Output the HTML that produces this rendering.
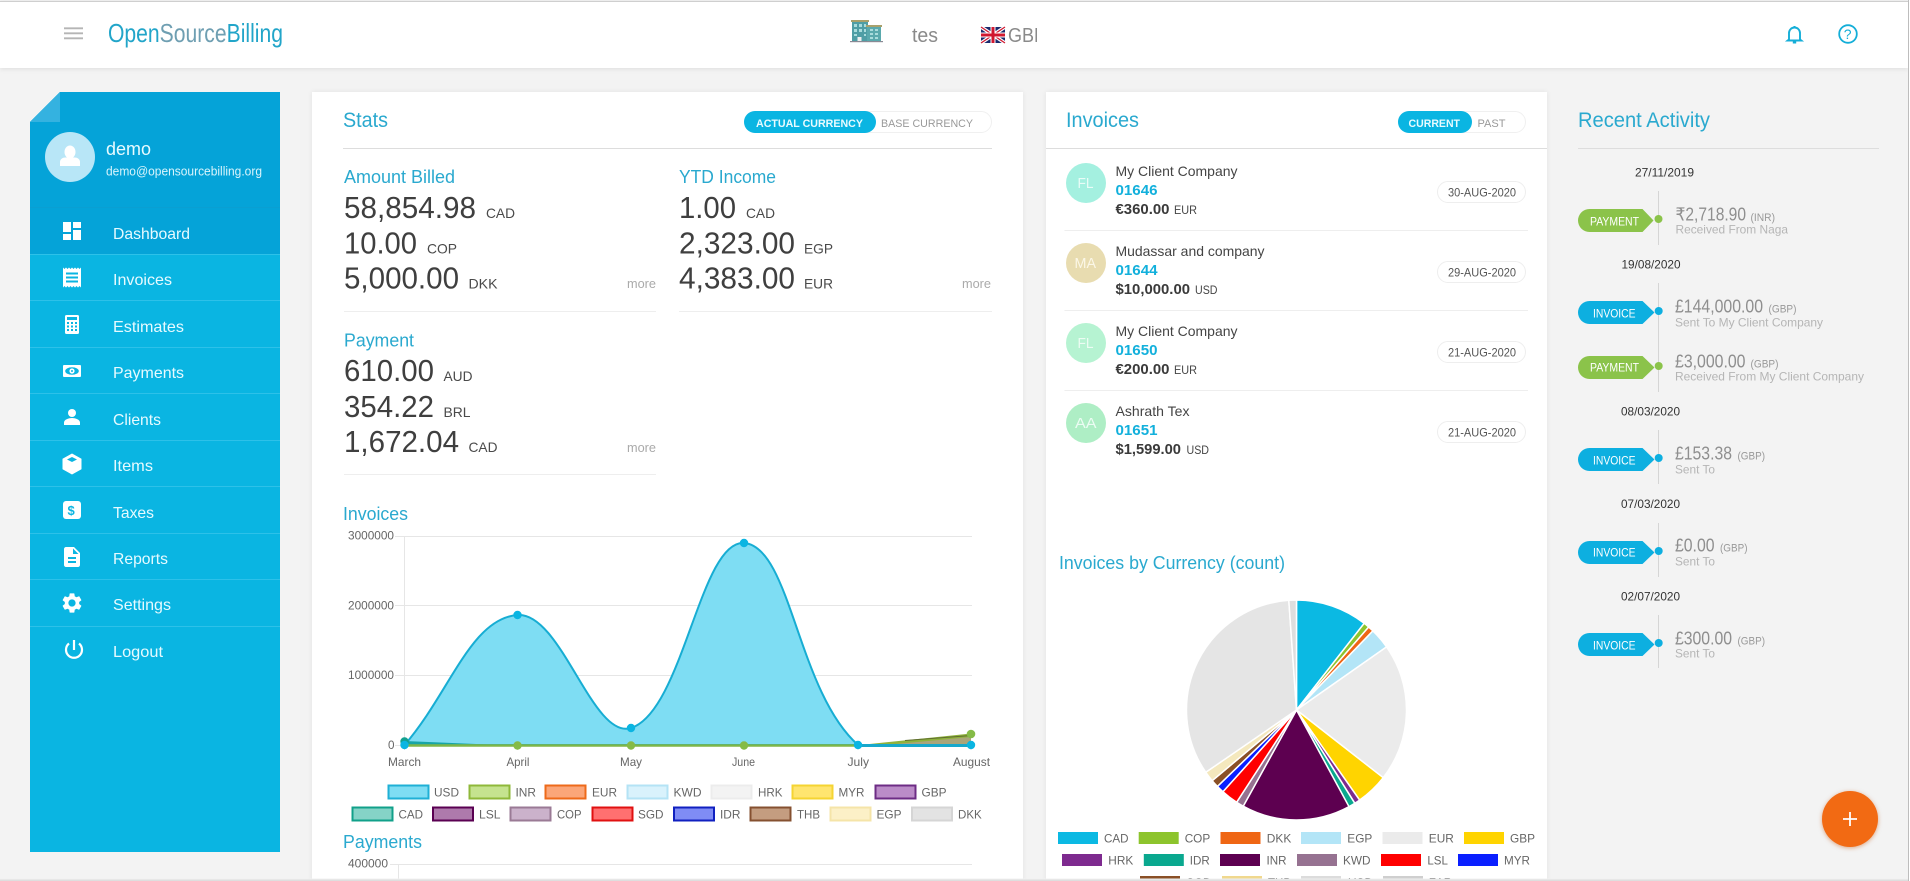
<!DOCTYPE html>
<html lang="en">
<head>
<meta charset="utf-8">
<title>OpenSourceBilling Dashboard</title>
<style>
html,body{margin:0;padding:0;width:1910px;height:881px;overflow:hidden;background:#f3f3f3;font-family:"Liberation Sans",sans-serif}
#wrap{position:absolute;left:0;top:0;width:1910px;height:881px;overflow:hidden;background:#f3f3f3}
.box{position:absolute}
#hdr{left:0;top:1px;width:1908px;height:67px;background:#fff;border-top:1px solid #cfcfcf;box-sizing:border-box;box-shadow:0 1px 5px rgba(0,0,0,.09)}
#side{left:30px;top:92px;width:250px;height:760px;background:#0ab5e2;clip-path:polygon(30px 0,100% 0,100% 100%,0 100%,0 30px)}
#c1{left:312px;top:92px;width:711px;height:789px;background:#fff;box-shadow:0 0 5px rgba(0,0,0,.07)}
#c2{left:1046px;top:92px;width:501px;height:789px;background:#fff;box-shadow:0 0 5px rgba(0,0,0,.07)}
#fab{left:1822px;top:791px;width:56px;height:56px;border-radius:50%;background:#f26a13;box-shadow:0 1px 4px rgba(200,90,20,.5)}
svg{position:absolute;left:0;top:0}
text{font-family:"Liberation Sans",sans-serif}
.h{fill:#2aa9cf}
.m{fill:#e6faff;font-size:16px}
.n{fill:#3f3f3f;font-size:31px}
.c{fill:#4a4a4a;font-size:14px}
.mo{fill:#aaa;font-size:13px}
.a{fill:#666;font-size:12px}
.t{fill:#fff;font-size:12px}
.d{fill:#333;font-size:12px}
.v{fill:#8f8f8f;font-size:18px}
.p{fill:#999;font-size:11px}
.s{fill:#b5b5b5;font-size:12px}
</style>
</head>
<body>
<div id="wrap">
<div class="box" id="hdr"></div>
<div class="box" id="side"></div>
<div class="box" id="c1"></div>
<div class="box" id="c2"></div>
<div class="box" id="fab"></div>
<svg width="1910" height="881" viewBox="0 0 1910 881" xmlns="http://www.w3.org/2000/svg">
<!-- header -->
<g stroke="#b5b5b5" stroke-width="1.8"><path d="M64 28.300H83M64 33.300H83M64 38.300H83"/></g>
<text x="108" y="42" font-size="26" textLength="175" lengthAdjust="spacingAndGlyphs"><tspan fill="#22a5c9">Open</tspan><tspan fill="#6f9fb2">Source</tspan><tspan fill="#22a5c9">Billing</tspan></text>
<!-- building -->
<g>
<rect x="852" y="21" width="16" height="20" fill="#4f9ea5"/><rect x="851" y="20" width="18" height="2" fill="#a9a16c"/>
<rect x="867" y="26" width="14" height="15" fill="#5aa9ad"/><rect x="866" y="25" width="16" height="2" fill="#a9a16c"/>
<g fill="#a9dcdc"><rect x="854" y="24" width="3" height="3"/><rect x="859" y="24" width="3" height="3"/><rect x="864" y="24" width="2" height="3"/><rect x="854" y="29" width="3" height="3"/><rect x="859" y="29" width="3" height="3"/><rect x="864" y="29" width="2" height="3"/><rect x="854" y="34" width="3" height="2"/><rect x="864" y="34" width="2" height="2"/><rect x="870" y="29" width="3" height="2"/><rect x="875" y="29" width="3" height="2"/><rect x="870" y="33" width="3" height="2"/><rect x="875" y="33" width="3" height="2"/><rect x="870" y="37" width="3" height="2"/><rect x="875" y="37" width="3" height="2"/></g>
<rect x="857.500" y="37" width="4" height="4" fill="#eee"/>
<rect x="850" y="41" width="33" height="1.200" fill="#8a8a95"/>
</g>
<text x="912" y="42" font-size="20" fill="#8a8a8a" textLength="26" lengthAdjust="spacingAndGlyphs">tes</text>
<!-- flag -->
<g>
<rect x="981" y="27" width="24" height="16" fill="#1a2a6c"/>
<path d="M981 27L1005 43M1005 27L981 43" stroke="#fff" stroke-width="3.500"/>
<path d="M981 27L1005 43M1005 27L981 43" stroke="#d01830" stroke-width="1.300"/>
<path d="M993 27V43M981 35H1005" stroke="#fff" stroke-width="5"/>
<path d="M993 27V43M981 35H1005" stroke="#d01830" stroke-width="3"/>
</g>
<svg x="1008" y="20" width="29" height="30" viewBox="1008 20 29 30"><text x="1008" y="42" font-size="20" fill="#8a8a8a" textLength="38" lengthAdjust="spacingAndGlyphs">GBP</text></svg>
<!-- bell + help -->
<path d="M1789 39.500V33a5.500 5.500 0 0 1 11 0v6.500l1.300 1H1787.700zM1794.500 26v1.500M1792.800 42.500h3.400" fill="none" stroke="#14aed8" stroke-width="1.900"/>
<circle cx="1848" cy="34" r="8.800" fill="none" stroke="#14aed8" stroke-width="1.800"/>
<text x="1843.800" y="39" font-size="14" fill="#14aed8">?</text>

<!-- sidebar -->
<path d="M30 122V207H280V92H60z" fill="#05a3d8"/>
<rect x="30" y="207" width="250" height="47" fill="#05a3d8"/>
<rect x="30" y="207" width="250" height="1" fill="#0a9fd2"/>
<polygon points="30,122 60,92 60,122" fill="#34b2e0"/>
<g fill="#2dc1e9"><rect x="30" y="254" width="250" height="1"/><rect x="30" y="300" width="250" height="1"/><rect x="30" y="347" width="250" height="1"/><rect x="30" y="393" width="250" height="1"/><rect x="30" y="440" width="250" height="1"/><rect x="30" y="486" width="250" height="1"/><rect x="30" y="533" width="250" height="1"/><rect x="30" y="579" width="250" height="1"/><rect x="30" y="626" width="250" height="1"/></g>
<circle cx="70" cy="157" r="25" fill="#b8e6f7"/>
<ellipse cx="70" cy="152" rx="5.500" ry="6.500" fill="#fff"/>
<path d="M60 166v-4c0-3 3-4.500 5-4.500h10c2 0 5 1.500 5 4.500v4z" fill="#fff"/>
<text x="106" y="155" font-size="18" fill="#e8fbff" textLength="45" lengthAdjust="spacingAndGlyphs">demo</text>
<text x="106" y="175.500" font-size="13" fill="#d8f4fc" textLength="156" lengthAdjust="spacingAndGlyphs">demo@opensourcebilling.org</text>

<g class="ico" fill="#fff">
<path transform="translate(60,219)" d="M3 13h8V3H3v10zm0 8h8v-6H3v6zm10 0h8V11h-8v10zm0-18v6h8V3h-8z"/>
<path transform="translate(60,265.500)" d="M18 17H6v-2h12v2zm0-4H6v-2h12v2zm0-4H6V7h12v2zM3 22l1.500-1.500L6 22l1.500-1.500L9 22l1.500-1.500L12 22l1.500-1.500L15 22l1.500-1.500L18 22l1.500-1.500L21 22V2l-1.500 1.500L18 2l-1.500 1.500L15 2l-1.500 1.500L12 2l-1.500 1.500L9 2 7.500 3.500 6 2 4.500 3.500 3 2v20z"/>
<rect x="65" y="315" width="14" height="19" rx="1.500"/>
<rect x="67" y="317" width="10" height="3" fill="#0ab5e2"/>
<g fill="#0ab5e2"><rect x="67" y="322" width="2" height="2"/><rect x="71" y="322" width="2" height="2"/><rect x="75" y="322" width="2" height="2"/><rect x="67" y="325.500" width="2" height="2"/><rect x="71" y="325.500" width="2" height="2"/><rect x="75" y="325.500" width="2" height="2"/><rect x="67" y="329" width="2" height="2"/><rect x="71" y="329" width="2" height="2"/><rect x="75" y="329" width="2" height="2"/></g>
<rect x="63" y="365" width="18" height="12" rx="1"/>
<ellipse cx="72" cy="371" rx="6.800" ry="3.800" fill="#0ab5e2"/><circle cx="72" cy="371" r="2.600"/><circle cx="72" cy="371" r="1" fill="#0ab5e2"/>
<circle cx="72" cy="413" r="4"/>
<path d="M64 425v-2.500c0-3 5-4.500 8-4.500s8 1.500 8 4.500V425z"/>
<path d="M72 454l9 5v10l-9 5-9-5v-10z" stroke="#fff" stroke-width="1" stroke-linejoin="round"/>
<polygon points="72,457 77,459.500 72,462 67,459.500" fill="#0ab5e2"/>
<rect x="63" y="501" width="18" height="18" rx="3"/>
<text x="67.500" y="515" font-size="13" font-weight="bold" fill="#0ab5e2">$</text>
<path transform="translate(60,545)" d="M14 2H6c-1.100 0-2 .9-2 2v16c0 1.100.9 2 2 2h12c1.100 0 2-.9 2-2V8l-6-6zm2 16H8v-2h8v2zm0-4H8v-2h8v2zm-3-5V3.500L18.500 9H13z"/>
<path transform="translate(60,591)" d="M19.140 12.940c.04-.3.06-.61.06-.94 0-.32-.02-.64-.07-.94l2.030-1.580c.18-.14.23-.41.12-.61l-1.920-3.320c-.12-.22-.37-.29-.59-.22l-2.390.96c-.5-.38-1.030-.7-1.620-.94l-.36-2.540c-.04-.24-.24-.41-.48-.41h-3.840c-.24 0-.43.17-.47.41l-.36 2.540c-.59.24-1.130.57-1.620.94l-2.390-.96c-.22-.08-.47 0-.59.22L2.740 8.870c-.12.21-.08.47.12.61l2.030 1.580c-.05.3-.09.63-.09.94s.02.64.07.94l-2.030 1.580c-.18.14-.23.41-.12.61l1.920 3.320c.12.22.37.29.59.22l2.390-.96c.5.38 1.030.7 1.620.94l.36 2.540c.05.24.24.41.48.41h3.840c.24 0 .44-.17.47-.41l.36-2.540c.59-.24 1.130-.56 1.620-.94l2.390.96c.22.08.47 0 .59-.22l1.920-3.320c.12-.22.07-.47-.12-.61l-2.010-1.580zM12 15.600c-1.980 0-3.600-1.620-3.600-3.600s1.620-3.600 3.600-3.600 3.600 1.620 3.600 3.600-1.620 3.600-3.600 3.600z"/>
<path d="M74 640v10M69 643.500a8 8 0 1 0 10 0" fill="none" stroke="#fff" stroke-width="2.200"/>
</g>
<text class="m" x="113" y="239" textLength="77" lengthAdjust="spacingAndGlyphs">Dashboard</text>
<text class="m" x="113" y="285" textLength="59" lengthAdjust="spacingAndGlyphs">Invoices</text>
<text class="m" x="113" y="332" textLength="71" lengthAdjust="spacingAndGlyphs">Estimates</text>
<text class="m" x="113" y="378" textLength="71" lengthAdjust="spacingAndGlyphs">Payments</text>
<text class="m" x="113" y="425" textLength="48" lengthAdjust="spacingAndGlyphs">Clients</text>
<text class="m" x="113" y="471" textLength="40" lengthAdjust="spacingAndGlyphs">Items</text>
<text class="m" x="113" y="518" textLength="41" lengthAdjust="spacingAndGlyphs">Taxes</text>
<text class="m" x="113" y="564" textLength="55" lengthAdjust="spacingAndGlyphs">Reports</text>
<text class="m" x="113" y="610" textLength="58" lengthAdjust="spacingAndGlyphs">Settings</text>
<text class="m" x="113" y="657" textLength="50" lengthAdjust="spacingAndGlyphs">Logout</text>

<!-- stats card -->
<text class="h" x="343" y="127" font-size="21" textLength="45" lengthAdjust="spacingAndGlyphs">Stats</text>
<rect x="343" y="148" width="649" height="1" fill="#ddd"/>
<rect x="744.500" y="111.500" width="247" height="21" rx="10.500" fill="#fff" stroke="#f0f0f0"/>
<rect x="744" y="111" width="132" height="22" rx="11" fill="#0ab5e2"/>
<text x="756" y="127" font-size="11" font-weight="bold" fill="#e9fbff" textLength="107" lengthAdjust="spacingAndGlyphs">ACTUAL CURRENCY</text>
<text x="881" y="127" font-size="11" fill="#999" textLength="92" lengthAdjust="spacingAndGlyphs">BASE CURRENCY</text>

<text class="h" x="344" y="183" font-size="18" textLength="111" lengthAdjust="spacingAndGlyphs">Amount Billed</text>
<text class="n" x="344" y="218" textLength="132" lengthAdjust="spacingAndGlyphs">58,854.98</text><text class="c" x="486" y="218" textLength="29" lengthAdjust="spacingAndGlyphs">CAD</text>
<text class="n" x="344" y="253.500" textLength="73" lengthAdjust="spacingAndGlyphs">10.00</text><text class="c" x="427" y="253.500" textLength="30" lengthAdjust="spacingAndGlyphs">COP</text>
<text class="n" x="344" y="288.500" textLength="115" lengthAdjust="spacingAndGlyphs">5,000.00</text><text class="c" x="468.500" y="288.500" textLength="29" lengthAdjust="spacingAndGlyphs">DKK</text>
<text class="mo" x="627" y="288" textLength="29" lengthAdjust="spacingAndGlyphs">more</text>
<rect x="344" y="311" width="312" height="1" fill="#eee"/>

<text class="h" x="679" y="183" font-size="18" textLength="97" lengthAdjust="spacingAndGlyphs">YTD Income</text>
<text class="n" x="679" y="218" textLength="57" lengthAdjust="spacingAndGlyphs">1.00</text><text class="c" x="746" y="218" textLength="29" lengthAdjust="spacingAndGlyphs">CAD</text>
<text class="n" x="679" y="253.500" textLength="116" lengthAdjust="spacingAndGlyphs">2,323.00</text><text class="c" x="804" y="253.500" textLength="29" lengthAdjust="spacingAndGlyphs">EGP</text>
<text class="n" x="679" y="288.500" textLength="116" lengthAdjust="spacingAndGlyphs">4,383.00</text><text class="c" x="804" y="288.500" textLength="29" lengthAdjust="spacingAndGlyphs">EUR</text>
<text class="mo" x="962" y="288" textLength="29" lengthAdjust="spacingAndGlyphs">more</text>
<rect x="679" y="311" width="313" height="1" fill="#eee"/>

<text class="h" x="344" y="346.500" font-size="18" textLength="70" lengthAdjust="spacingAndGlyphs">Payment</text>
<text class="n" x="344" y="381" textLength="90" lengthAdjust="spacingAndGlyphs">610.00</text><text class="c" x="443.500" y="381" textLength="29" lengthAdjust="spacingAndGlyphs">AUD</text>
<text class="n" x="344" y="417" textLength="90" lengthAdjust="spacingAndGlyphs">354.22</text><text class="c" x="443.500" y="417" textLength="27" lengthAdjust="spacingAndGlyphs">BRL</text>
<text class="n" x="344" y="452" textLength="115" lengthAdjust="spacingAndGlyphs">1,672.04</text><text class="c" x="468.500" y="452" textLength="29" lengthAdjust="spacingAndGlyphs">CAD</text>
<text class="mo" x="627" y="452" textLength="29" lengthAdjust="spacingAndGlyphs">more</text>
<rect x="344" y="474" width="312" height="1" fill="#eee"/>

<text class="h" x="343" y="520" font-size="18" textLength="65" lengthAdjust="spacingAndGlyphs">Invoices</text>

<!-- line chart -->
<g stroke="#e6e6e6" stroke-width="1"><path d="M395 536.500H972M395 605.500H972M395 675.500H972M395 745.500H972M404.500 536V750M517.500 745V750M631 745V750M744 745V750M858 745V750M971 745V750"/></g>
<path d="M404.500 745C449.700 693 470.600 618.500 517.500 615C561.200 611.700 592.500 740.200 631 728C683.100 711.400 700.200 539.700 744 543C791 546.500 797 690.700 858 745L971 745Z" fill="#7eddf3" stroke="#17add3" stroke-width="2"/>
<polygon points="404.500,741 500,745 404.500,746" fill="#17a5a5"/>
<polygon points="860,745 971,733.500 971,745" fill="#8fb23c"/>
<polygon points="885,745 971,737 971,745" fill="#a9a57a"/>
<path d="M905 740.500L971 735.500" stroke="#5f6d2e" stroke-width="1"/>
<path d="M404.500 745.500H858" stroke="#7fb648" stroke-width="2.500"/>
<path d="M858 745.500H971" stroke="#17a8cc" stroke-width="3"/>
<g fill="#0ab5e2"><circle cx="517.500" cy="615" r="4.200"/><circle cx="631" cy="728" r="4.200"/><circle cx="744" cy="543" r="4.200"/></g>
<circle cx="404.500" cy="741.500" r="4.200" fill="#12a08f"/>
<circle cx="404.500" cy="745" r="4.200" fill="#0ab5e2"/>
<g fill="#85bb47"><circle cx="517.500" cy="745.500" r="4.200"/><circle cx="631" cy="745.500" r="4.200"/><circle cx="744" cy="745.500" r="4.200"/><circle cx="971" cy="734" r="4.300"/></g>
<g fill="#0ab5e2"><circle cx="858" cy="745" r="4.200"/><circle cx="971" cy="745" r="4.200"/></g>
<text class="a" x="348" y="539.500" textLength="46" lengthAdjust="spacingAndGlyphs">3000000</text>
<text class="a" x="348" y="609.500" textLength="46" lengthAdjust="spacingAndGlyphs">2000000</text>
<text class="a" x="348" y="679" textLength="46" lengthAdjust="spacingAndGlyphs">1000000</text>
<text class="a" x="388" y="749" textLength="6.500" lengthAdjust="spacingAndGlyphs">0</text>
<text class="a" x="388" y="766" textLength="33" lengthAdjust="spacingAndGlyphs">March</text>
<text class="a" x="506.500" y="766" textLength="23" lengthAdjust="spacingAndGlyphs">April</text>
<text class="a" x="620" y="766" textLength="22" lengthAdjust="spacingAndGlyphs">May</text>
<text class="a" x="732" y="766" textLength="23" lengthAdjust="spacingAndGlyphs">June</text>
<text class="a" x="847.500" y="766" textLength="21.500" lengthAdjust="spacingAndGlyphs">July</text>
<text class="a" x="953" y="766" textLength="37" lengthAdjust="spacingAndGlyphs">August</text>

<g stroke-width="2">
<rect x="388.500" y="785.500" width="40" height="13" fill="#7eddf3" stroke="#1fb0d6"/>
<rect x="469.500" y="785.500" width="40" height="13" fill="#c5e38f" stroke="#8fb83a"/>
<rect x="545.500" y="785.500" width="40" height="13" fill="#fba679" stroke="#ee6a1a"/>
<rect x="627.500" y="785.500" width="40" height="13" fill="#d9f2fc" stroke="#b4e3f5"/>
<rect x="711.500" y="785.500" width="40" height="13" fill="#f3f3f3" stroke="#ececec"/>
<rect x="792.500" y="785.500" width="40" height="13" fill="#ffe56f" stroke="#f5d432"/>
<rect x="875.500" y="785.500" width="40" height="13" fill="#bb8cc8" stroke="#6d2c85"/>
<rect x="352.500" y="807.500" width="40" height="13" fill="#85d3c7" stroke="#11a08a"/>
<rect x="433" y="807.500" width="40" height="13" fill="#ae7aac" stroke="#5a0052"/>
<rect x="510.500" y="807.500" width="40" height="13" fill="#cbb2cb" stroke="#9a7a95"/>
<rect x="592.500" y="807.500" width="40" height="13" fill="#ff7070" stroke="#e01010"/>
<rect x="674" y="807.500" width="40" height="13" fill="#7f8cf5" stroke="#1020c0"/>
<rect x="750.500" y="807.500" width="40" height="13" fill="#c49d80" stroke="#855030"/>
<rect x="830.500" y="807.500" width="40" height="13" fill="#fcf0c7" stroke="#f5e4a8"/>
<rect x="912" y="807.500" width="40" height="13" fill="#e3e3e3" stroke="#d5d5d5"/>
</g>
<text class="a" x="434" y="796.500" textLength="25" lengthAdjust="spacingAndGlyphs">USD</text>
<text class="a" x="515.500" y="796.500" textLength="20.500" lengthAdjust="spacingAndGlyphs">INR</text>
<text class="a" x="592" y="796.500" textLength="25" lengthAdjust="spacingAndGlyphs">EUR</text>
<text class="a" x="673.500" y="796.500" textLength="28" lengthAdjust="spacingAndGlyphs">KWD</text>
<text class="a" x="758" y="796.500" textLength="24.500" lengthAdjust="spacingAndGlyphs">HRK</text>
<text class="a" x="838.500" y="796.500" textLength="26" lengthAdjust="spacingAndGlyphs">MYR</text>
<text class="a" x="921.500" y="796.500" textLength="25" lengthAdjust="spacingAndGlyphs">GBP</text>
<text class="a" x="398.500" y="818.500" textLength="24.500" lengthAdjust="spacingAndGlyphs">CAD</text>
<text class="a" x="479" y="818.500" textLength="21.500" lengthAdjust="spacingAndGlyphs">LSL</text>
<text class="a" x="557" y="818.500" textLength="24.500" lengthAdjust="spacingAndGlyphs">COP</text>
<text class="a" x="638" y="818.500" textLength="25.500" lengthAdjust="spacingAndGlyphs">SGD</text>
<text class="a" x="720" y="818.500" textLength="20.500" lengthAdjust="spacingAndGlyphs">IDR</text>
<text class="a" x="797" y="818.500" textLength="23" lengthAdjust="spacingAndGlyphs">THB</text>
<text class="a" x="876.500" y="818.500" textLength="25" lengthAdjust="spacingAndGlyphs">EGP</text>
<text class="a" x="958" y="818.500" textLength="23.700" lengthAdjust="spacingAndGlyphs">DKK</text>

<text class="h" x="343" y="848" font-size="18" textLength="79" lengthAdjust="spacingAndGlyphs">Payments</text>
<text class="a" x="348" y="867.500" textLength="40" lengthAdjust="spacingAndGlyphs">400000</text>
<path d="M390 864.500H972M398.500 864V881" stroke="#e6e6e6"/>

<!-- invoices card -->
<text class="h" x="1066" y="127" font-size="21" textLength="73" lengthAdjust="spacingAndGlyphs">Invoices</text>
<rect x="1046" y="148" width="501" height="1" fill="#ddd"/>
<rect x="1398.500" y="111.500" width="127" height="21" rx="10.500" fill="#fff" stroke="#f0f0f0"/>
<rect x="1398" y="111" width="74" height="22" rx="11" fill="#0ab5e2"/>
<text x="1408.500" y="127" font-size="11" font-weight="bold" fill="#e9fbff" textLength="51.500" lengthAdjust="spacingAndGlyphs">CURRENT</text>
<text x="1477.500" y="127" font-size="11" fill="#999" textLength="28" lengthAdjust="spacingAndGlyphs">PAST</text>

<g fill="#eee"><rect x="1064.500" y="230" width="463.500" height="1"/><rect x="1064.500" y="310" width="463.500" height="1"/><rect x="1064.500" y="390" width="463.500" height="1"/></g>
<circle cx="1086" cy="183" r="20" fill="#a4f0e0"/><text x="1077.500" y="188" font-size="15" fill="#e9fcf7" textLength="16" lengthAdjust="spacingAndGlyphs">FL</text>
<circle cx="1086" cy="263" r="20" fill="#e8dcb0"/><text x="1074.500" y="268" font-size="15" fill="#fbf7e7" textLength="21.500" lengthAdjust="spacingAndGlyphs">MA</text>
<circle cx="1086" cy="343" r="20" fill="#b6f3d2"/><text x="1077.500" y="348" font-size="15" fill="#ecfcf3" textLength="16" lengthAdjust="spacingAndGlyphs">FL</text>
<circle cx="1086" cy="423" r="20" fill="#aeeec5"/><text x="1075" y="428" font-size="15" fill="#ecfcf3" textLength="21.500" lengthAdjust="spacingAndGlyphs">AA</text>

<g font-size="14" fill="#444">
<text x="1115.500" y="176" textLength="122" lengthAdjust="spacingAndGlyphs">My Client Company</text>
<text x="1115.500" y="256" textLength="149" lengthAdjust="spacingAndGlyphs">Mudassar and company</text>
<text x="1115.500" y="336" textLength="122" lengthAdjust="spacingAndGlyphs">My Client Company</text>
<text x="1115.500" y="416" textLength="74" lengthAdjust="spacingAndGlyphs">Ashrath Tex</text>
</g>
<g font-size="15" font-weight="bold" fill="#12b0dc">
<text x="1115.500" y="195" textLength="42" lengthAdjust="spacingAndGlyphs">01646</text>
<text x="1115.500" y="275" textLength="42" lengthAdjust="spacingAndGlyphs">01644</text>
<text x="1115.500" y="355" textLength="42" lengthAdjust="spacingAndGlyphs">01650</text>
<text x="1115.500" y="435" textLength="42" lengthAdjust="spacingAndGlyphs">01651</text>
</g>
<g font-size="15" font-weight="bold" fill="#3a3a3a">
<text x="1115.500" y="214" textLength="54" lengthAdjust="spacingAndGlyphs">€360.00</text>
<text x="1115.500" y="294" textLength="74.500" lengthAdjust="spacingAndGlyphs">$10,000.00</text>
<text x="1115.500" y="374" textLength="54" lengthAdjust="spacingAndGlyphs">€200.00</text>
<text x="1115.500" y="454" textLength="65.500" lengthAdjust="spacingAndGlyphs">$1,599.00</text>
</g>
<g font-size="12" fill="#444">
<text x="1174" y="214" textLength="23" lengthAdjust="spacingAndGlyphs">EUR</text>
<text x="1195" y="294" textLength="22.500" lengthAdjust="spacingAndGlyphs">USD</text>
<text x="1174" y="374" textLength="23" lengthAdjust="spacingAndGlyphs">EUR</text>
<text x="1186.500" y="454" textLength="22.500" lengthAdjust="spacingAndGlyphs">USD</text>
</g>
<g fill="#fff" stroke="#eee"><rect x="1437.500" y="181.500" width="88" height="21" rx="10.500"/><rect x="1437.500" y="261.500" width="88" height="21" rx="10.500"/><rect x="1437.500" y="341.500" width="88" height="21" rx="10.500"/><rect x="1437.500" y="421.500" width="88" height="21" rx="10.500"/></g>
<g font-size="12" fill="#555">
<text x="1448" y="196.500" textLength="68" lengthAdjust="spacingAndGlyphs">30-AUG-2020</text>
<text x="1448" y="276.500" textLength="68" lengthAdjust="spacingAndGlyphs">29-AUG-2020</text>
<text x="1448" y="356.500" textLength="68" lengthAdjust="spacingAndGlyphs">21-AUG-2020</text>
<text x="1448" y="436.500" textLength="68" lengthAdjust="spacingAndGlyphs">21-AUG-2020</text>
</g>

<text class="h" x="1059" y="569" font-size="18" textLength="226" lengthAdjust="spacingAndGlyphs">Invoices by Currency (count)</text>

<!-- pie -->
<g stroke="#fff" stroke-width="1.500" stroke-linejoin="round">
<path d="M1296.500 710L1296.500 600A110 110 0 0 1 1364.200 623.300Z" fill="#0bb9e3"/>
<path d="M1296.500 710L1364.200 623.300A110 110 0 0 1 1368.700 627Z" fill="#8dc42d"/>
<path d="M1296.500 710L1368.700 627A110 110 0 0 1 1372.900 630.900Z" fill="#ef6614"/>
<path d="M1296.500 710L1372.900 630.900A110 110 0 0 1 1386.600 646.900Z" fill="#b3e5f7"/>
<path d="M1296.500 710L1386.600 646.900A110 110 0 0 1 1383.200 777.700Z" fill="#ebebeb"/>
<path d="M1296.500 710L1383.200 777.700A110 110 0 0 1 1359.600 800.100Z" fill="#ffd400"/>
<path d="M1296.500 710L1359.600 800.100A110 110 0 0 1 1354.800 803.300Z" fill="#7e2a8f"/>
<path d="M1296.500 710L1354.800 803.300A110 110 0 0 1 1349 806.700Z" fill="#0aa88f"/>
<path d="M1296.500 710L1349 806.700A110 110 0 0 1 1243.200 806.200Z" fill="#5d0050"/>
<path d="M1296.500 710L1243.200 806.200A110 110 0 0 1 1236.600 802.300Z" fill="#967291"/>
<path d="M1296.500 710L1236.600 802.300A110 110 0 0 1 1222.900 791.700Z" fill="#ff0000"/>
<path d="M1296.500 710L1222.900 791.700A110 110 0 0 1 1217.400 786.400Z" fill="#0a1fff"/>
<path d="M1296.500 710L1217.400 786.400A110 110 0 0 1 1212.200 780.700Z" fill="#8a5026"/>
<path d="M1296.500 710L1212.200 780.700A110 110 0 0 1 1205.800 772.300Z" fill="#f4e8bd"/>
<path d="M1296.500 710L1205.800 772.300A110 110 0 0 1 1288.800 600.300Z" fill="#e5e5e5"/>
<path d="M1296.500 710L1288.800 600.300A110 110 0 0 1 1296.500 600Z" fill="#dedede"/>
</g>
<!-- pie legend -->
<rect x="1058" y="832" width="40" height="12" fill="#0bb9e3"/><rect x="1138.700" y="832" width="40" height="12" fill="#8dc42d"/><rect x="1220.500" y="832" width="40" height="12" fill="#ef6614"/><rect x="1301" y="832" width="40" height="12" fill="#b3e5f7"/><rect x="1382.500" y="832" width="40" height="12" fill="#ebebeb"/><rect x="1464" y="832" width="40" height="12" fill="#ffd400"/>
<rect x="1062" y="854" width="40" height="12" fill="#7e2a8f"/><rect x="1143.800" y="854" width="40" height="12" fill="#0aa88f"/><rect x="1220" y="854" width="40" height="12" fill="#5d0050"/><rect x="1297" y="854" width="40" height="12" fill="#967291"/><rect x="1381" y="854" width="40" height="12" fill="#ff0000"/><rect x="1458" y="854" width="40" height="12" fill="#0a1fff"/>
<rect x="1140" y="876" width="40" height="12" fill="#8a5026"/><rect x="1222" y="876" width="40" height="12" fill="#f0d88e"/><rect x="1301" y="876" width="40" height="12" fill="#dcdcdc"/><rect x="1383" y="876" width="40" height="12" fill="#cfcfcf"/>
<text class="a" x="1104" y="842.500" textLength="24.500" lengthAdjust="spacingAndGlyphs">CAD</text>
<text class="a" x="1184.700" y="842.500" textLength="25.500" lengthAdjust="spacingAndGlyphs">COP</text>
<text class="a" x="1266.800" y="842.500" textLength="24.500" lengthAdjust="spacingAndGlyphs">DKK</text>
<text class="a" x="1347.300" y="842.500" textLength="25" lengthAdjust="spacingAndGlyphs">EGP</text>
<text class="a" x="1428.800" y="842.500" textLength="25" lengthAdjust="spacingAndGlyphs">EUR</text>
<text class="a" x="1510" y="842.500" textLength="25" lengthAdjust="spacingAndGlyphs">GBP</text>
<text class="a" x="1108.300" y="864.500" textLength="25" lengthAdjust="spacingAndGlyphs">HRK</text>
<text class="a" x="1189.800" y="864.500" textLength="20" lengthAdjust="spacingAndGlyphs">IDR</text>
<text class="a" x="1266.500" y="864.500" textLength="20" lengthAdjust="spacingAndGlyphs">INR</text>
<text class="a" x="1343" y="864.500" textLength="27.500" lengthAdjust="spacingAndGlyphs">KWD</text>
<text class="a" x="1427.400" y="864.500" textLength="20.500" lengthAdjust="spacingAndGlyphs">LSL</text>
<text class="a" x="1504" y="864.500" textLength="26" lengthAdjust="spacingAndGlyphs">MYR</text>
<text class="a" x="1186.400" y="886.500" textLength="25" lengthAdjust="spacingAndGlyphs">SGD</text>
<text class="a" x="1268" y="886.500" textLength="23" lengthAdjust="spacingAndGlyphs">THB</text>
<text class="a" x="1348" y="886.500" textLength="25" lengthAdjust="spacingAndGlyphs">USD</text>
<text class="a" x="1429" y="886.500" textLength="23" lengthAdjust="spacingAndGlyphs">ZAR</text>

<!-- recent activity -->
<text class="h" x="1578" y="127" font-size="21" textLength="132" lengthAdjust="spacingAndGlyphs">Recent Activity</text>
<rect x="1578" y="148" width="301" height="1" fill="#ddd"/>
<text class="d" x="1635" y="176.500" textLength="59" lengthAdjust="spacingAndGlyphs">27/11/2019</text>
<text class="d" x="1621.500" y="268.500" textLength="59" lengthAdjust="spacingAndGlyphs">19/08/2020</text>
<text class="d" x="1621" y="415.500" textLength="59" lengthAdjust="spacingAndGlyphs">08/03/2020</text>
<text class="d" x="1621" y="508" textLength="59" lengthAdjust="spacingAndGlyphs">07/03/2020</text>
<text class="d" x="1621" y="600.500" textLength="59" lengthAdjust="spacingAndGlyphs">02/07/2020</text>
<g stroke="#d5d5d5"><path d="M1658.500 191V245M1658.500 283V392M1658.500 430V484M1658.500 523V577M1658.500 615V668"/></g>

<path d="M1589.500 209h53l11 11.500-11 11.500h-53a11.500 11.500 0 0 1 0-23z" fill="#8bc34a"/><circle cx="1658.500" cy="219" r="4" fill="#8bc34a"/>
<path d="M1589.500 301h53l12 11.500-12 11.500h-53a11.500 11.500 0 0 1 0-23z" fill="#0dafe0"/><circle cx="1658.700" cy="311" r="4" fill="#0dafe0"/>
<path d="M1589.500 356h53l12 11.500-12 11.500h-53a11.500 11.500 0 0 1 0-23z" fill="#8bc34a"/><circle cx="1658.700" cy="366" r="4" fill="#8bc34a"/>
<path d="M1589.500 448h53l12 11.500-12 11.500h-53a11.500 11.500 0 0 1 0-23z" fill="#0dafe0"/><circle cx="1658.700" cy="458" r="4" fill="#0dafe0"/>
<path d="M1589.500 541h53l12 11.500-12 11.500h-53a11.500 11.500 0 0 1 0-23z" fill="#0dafe0"/><circle cx="1658.700" cy="551" r="4" fill="#0dafe0"/>
<path d="M1589.500 633h53l12 11.500-12 11.500h-53a11.500 11.500 0 0 1 0-23z" fill="#0dafe0"/><circle cx="1658.700" cy="643" r="4" fill="#0dafe0"/>
<text class="t" x="1590" y="225.500" textLength="49" lengthAdjust="spacingAndGlyphs">PAYMENT</text>
<text class="t" x="1593" y="317.500" textLength="42.500" lengthAdjust="spacingAndGlyphs">INVOICE</text>
<text class="t" x="1590" y="371.500" textLength="49" lengthAdjust="spacingAndGlyphs">PAYMENT</text>
<text class="t" x="1593" y="464.500" textLength="42.500" lengthAdjust="spacingAndGlyphs">INVOICE</text>
<text class="t" x="1593" y="556.500" textLength="42.500" lengthAdjust="spacingAndGlyphs">INVOICE</text>
<text class="t" x="1593" y="649.500" textLength="42.500" lengthAdjust="spacingAndGlyphs">INVOICE</text>

<text class="v" x="1675.500" y="220.500" textLength="70.500" lengthAdjust="spacingAndGlyphs">₹2,718.90</text><text class="p" x="1750.500" y="221" textLength="24.500" lengthAdjust="spacingAndGlyphs">(INR)</text>
<text class="s" x="1675.500" y="233.500" textLength="112.500" lengthAdjust="spacingAndGlyphs">Received From Naga</text>
<text class="v" x="1675" y="312.500" textLength="88" lengthAdjust="spacingAndGlyphs">£144,000.00</text><text class="p" x="1768.500" y="312.500" textLength="28" lengthAdjust="spacingAndGlyphs">(GBP)</text>
<text class="s" x="1675" y="326.500" textLength="148" lengthAdjust="spacingAndGlyphs">Sent To My Client Company</text>
<text class="v" x="1675" y="367.500" textLength="70.500" lengthAdjust="spacingAndGlyphs">£3,000.00</text><text class="p" x="1750.500" y="367.500" textLength="28" lengthAdjust="spacingAndGlyphs">(GBP)</text>
<text class="s" x="1675" y="380.500" textLength="189" lengthAdjust="spacingAndGlyphs">Received From My Client Company</text>
<text class="v" x="1675" y="459.500" textLength="57" lengthAdjust="spacingAndGlyphs">£153.38</text><text class="p" x="1737.500" y="459.500" textLength="27.500" lengthAdjust="spacingAndGlyphs">(GBP)</text>
<text class="s" x="1675" y="473.500" textLength="40" lengthAdjust="spacingAndGlyphs">Sent To</text>
<text class="v" x="1675" y="551.500" textLength="39.500" lengthAdjust="spacingAndGlyphs">£0.00</text><text class="p" x="1720" y="551.500" textLength="27.500" lengthAdjust="spacingAndGlyphs">(GBP)</text>
<text class="s" x="1675" y="565.500" textLength="40" lengthAdjust="spacingAndGlyphs">Sent To</text>
<text class="v" x="1675" y="644.500" textLength="57" lengthAdjust="spacingAndGlyphs">£300.00</text><text class="p" x="1737.500" y="644.500" textLength="27.500" lengthAdjust="spacingAndGlyphs">(GBP)</text>
<text class="s" x="1675" y="657.500" textLength="40" lengthAdjust="spacingAndGlyphs">Sent To</text>

<!-- fab plus -->
<path d="M1850 812V826M1843 819H1857" stroke="#fff" stroke-width="1.800"/>

<!-- viewport edges -->
<rect x="0" y="878.500" width="1908" height="1" fill="#f0f0f0"/>
<rect x="0" y="879.500" width="1908" height="1.500" fill="#dedede"/>
<rect x="1908" y="0" width="1" height="881" fill="#bdbdbd"/>
<rect x="1909" y="0" width="1" height="881" fill="#fff"/>
</svg>
</div>
</body>
</html>
